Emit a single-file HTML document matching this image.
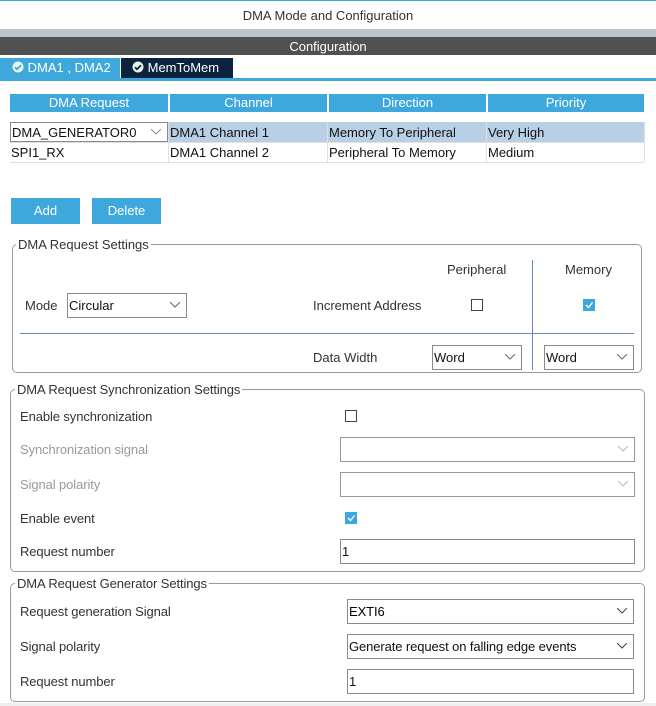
<!DOCTYPE html>
<html><head><style>
*{box-sizing:border-box;margin:0;padding:0}
body{width:656px;height:706px;position:relative;background:#fff;font-family:"Liberation Sans",sans-serif;font-size:13px;color:#333;overflow:hidden}
.a{position:absolute}
.n{font-family:"Liberation Sans",sans-serif;font-size:13px;color:#333;letter-spacing:-0.1px}
.th{position:absolute;top:94px;height:18px;background:#3ea8dc;color:#fff;text-align:center;line-height:18px;font-size:13px}
.td{position:absolute;height:20px;line-height:20px;padding-left:2px;font-size:13px;color:#111}
.btn{position:absolute;top:198px;height:26px;width:69px;background:#3ea8dc;color:#fff;text-align:center;line-height:26px;font-size:13px}
.fs{position:absolute;border:1px solid #9a9a9a;border-radius:5px}
.lg{position:absolute;background:#fff;padding:0 2px;line-height:14px}
.sel{position:absolute;border:1px solid #8a8a8a;background:#fff;height:25px;line-height:23px;padding-left:1px;color:#111}
.sel.d{border-color:#999}
.sel svg{position:absolute;right:6px;top:8px}
.cb{position:absolute;width:12px;height:12px;border:1px solid #444;background:#fff}
.cb.on{background:#3ea8dc;border-color:#3ea8dc}
</style></head><body>
<div class="a" style="left:0;top:0;width:656px;height:1px;background:#3ea8dc"></div>
<div class="a" style="left:0;top:8px;width:656px;text-align:center;font-size:13px;color:#333">DMA Mode and Configuration</div>
<div class="a" style="left:0;top:29px;width:656px;height:8px;background:#bcc4c9"></div>
<div class="a" style="left:0;top:37px;width:656px;height:18px;background:#505252;color:#fff;text-align:center;line-height:19px">Configuration</div>
<div class="a" style="left:0;top:58px;width:120px;height:21px;background:#3ea8dc;color:#fff;line-height:20px;padding-left:12px"><svg width="12" height="12" style="vertical-align:-1px"><circle cx="6" cy="6" r="5.5" fill="#e8f4e8"/><path d="M3 6.2l2 2 4-4" stroke="#3ea8dc" stroke-width="1.8" fill="none"/></svg> DMA1 , DMA2</div>
<div class="a" style="left:121px;top:58px;width:112px;height:20px;background:#0c2340;color:#fff;line-height:20px;padding-left:11px"><svg width="12" height="12" style="vertical-align:-1px"><circle cx="6" cy="6" r="5.5" fill="#e8f4e8"/><path d="M3 6.2l2 2 4-4" stroke="#0c2340" stroke-width="1.8" fill="none"/></svg> MemToMem</div>
<div class="a" style="left:0;top:78px;width:656px;height:3px;background:#3ea8dc"></div>

<div class="th" style="left:10px;width:158px">DMA Request</div>
<div class="th" style="left:170px;width:157px">Channel</div>
<div class="th" style="left:329px;width:157px">Direction</div>
<div class="th" style="left:488px;width:156px">Priority</div>

<div class="a" style="left:168px;top:122px;width:476px;height:20px;background:#b8cfe6"></div>
<div class="a" style="left:10px;top:142px;width:634px;height:1px;background:#e0e0e0"></div>
<div class="a" style="left:10px;top:162px;width:634px;height:1px;background:#ddd"></div>
<div class="a" style="left:168px;top:122px;width:1px;height:40px;background:#e0e0e0"></div>
<div class="a" style="left:327px;top:122px;width:1px;height:40px;background:#e0e0e0"></div>
<div class="a" style="left:486px;top:122px;width:1px;height:40px;background:#e0e0e0"></div>
<div class="a" style="left:644px;top:122px;width:1px;height:40px;background:#e0e0e0"></div>
<div class="sel" style="left:10px;top:122px;width:158px;height:20px;line-height:19px">DMA_GENERATOR0<svg width="10" height="6" style="top:6px"><path d="M0 0l5 5 5-5" stroke="#888" fill="none"/></svg></div>
<div class="td" style="left:168px;top:123px">DMA1 Channel 1</div>
<div class="td" style="left:327px;top:123px">Memory To Peripheral</div>
<div class="td" style="left:486px;top:123px">Very High</div>
<div class="td" style="left:9px;top:143px">SPI1_RX</div>
<div class="td" style="left:168px;top:143px">DMA1 Channel 2</div>
<div class="td" style="left:327px;top:143px">Peripheral To Memory</div>
<div class="td" style="left:486px;top:143px">Medium</div>

<div class="btn" style="left:11px">Add</div>
<div class="btn" style="left:92px">Delete</div>

<div class="fs" style="left:12px;top:244px;width:630px;height:129px"></div>
<div class="lg" style="left:16px;top:238px">DMA Request Settings</div>
<div class="a" style="left:25px;top:298px">Mode</div>
<div class="sel" style="left:67px;top:293px;width:120px">Circular<svg width="10" height="6"><path d="M0 0l5 5 5-5" stroke="#666" fill="none"/></svg></div>
<div class="a" style="left:447px;top:262px">Peripheral</div>
<div class="a" style="left:565px;top:262px">Memory</div>
<div class="a" style="left:532px;top:260px;width:1px;height:110px;background:#6a86c0"></div>
<div class="a" style="left:20px;top:333px;width:614px;height:1px;background:#6a86c0"></div>
<div class="a" style="left:313px;top:298px">Increment Address</div>
<div class="cb" style="left:471px;top:299px"></div>
<div class="cb on" style="left:583px;top:299px"><svg width="10" height="10" style="position:absolute;left:0;top:0"><path d="M2 5l2.5 2.5 4-5" stroke="#fff" stroke-width="1.3" fill="none"/></svg></div>
<div class="a" style="left:313px;top:350px">Data Width</div>
<div class="sel" style="left:432px;top:345px;width:90px">Word<svg width="10" height="6"><path d="M0 0l5 5 5-5" stroke="#666" fill="none"/></svg></div>
<div class="sel" style="left:544px;top:345px;width:90px">Word<svg width="10" height="6"><path d="M0 0l5 5 5-5" stroke="#666" fill="none"/></svg></div>

<div class="fs" style="left:10px;top:389px;width:635px;height:183px"></div>
<div class="lg n" style="left:15px;top:383px">DMA Request Synchronization Settings</div>
<div class="a n" style="left:20px;top:409px">Enable synchronization</div>
<div class="cb" style="left:345px;top:410px"></div>
<div class="a n" style="left:20px;top:442px;color:#999">Synchronization signal</div>
<div class="sel d" style="left:340px;top:437px;width:295px"><svg width="10" height="6"><path d="M0 0l5 5 5-5" stroke="#bbb" fill="none"/></svg></div>
<div class="a n" style="left:20px;top:477px;color:#999">Signal polarity</div>
<div class="sel d" style="left:340px;top:472px;width:295px"><svg width="10" height="6"><path d="M0 0l5 5 5-5" stroke="#bbb" fill="none"/></svg></div>
<div class="a n" style="left:20px;top:511px">Enable event</div>
<div class="cb on" style="left:345px;top:512px"><svg width="10" height="10" style="position:absolute;left:0;top:0"><path d="M2 5l2.5 2.5 4-5" stroke="#fff" stroke-width="1.3" fill="none"/></svg></div>
<div class="a n" style="left:20px;top:544px">Request number</div>
<div class="sel" style="left:340px;top:539px;width:295px">1</div>

<div class="fs" style="left:10px;top:583px;width:635px;height:119px"></div>
<div class="lg n" style="left:15px;top:577px">DMA Request Generator Settings</div>
<div class="a n" style="left:20px;top:604px">Request generation Signal</div>
<div class="sel n" style="left:347px;top:599px;width:287px;color:#000">EXTI6<svg width="10" height="6"><path d="M0 0l5 5 5-5" stroke="#444" fill="none"/></svg></div>
<div class="a n" style="left:20px;top:639px">Signal polarity</div>
<div class="sel n" style="left:347px;top:634px;width:287px">Generate request on falling edge events<svg width="10" height="6"><path d="M0 0l5 5 5-5" stroke="#444" fill="none"/></svg></div>
<div class="a n" style="left:20px;top:674px">Request number</div>
<div class="sel" style="left:347px;top:669px;width:287px">1</div>
<div class="a" style="left:0;top:703px;width:656px;height:3px;background:#eee"></div>
</body></html>
